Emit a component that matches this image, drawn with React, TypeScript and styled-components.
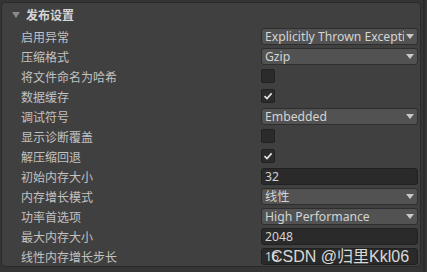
import React from "react";
import styled, { createGlobalStyle } from "styled-components";

const Global = createGlobalStyle`
  html, body {
    margin: 0;
    padding: 0;
    background: #353535;
    width: 427px;
    height: 272px;
    overflow: hidden;
  }
`;

const Page = styled.div`
  position: relative;
  width: 427px;
  height: 272px;
  display: flex;
  padding: 2px 0 0 1px;
  box-sizing: border-box;
  background: #353535;
  font-family: "Noto Sans CJK SC", "Noto Sans", sans-serif;
`;

const Panel = styled.div`
  width: 420px;
  height: 265px;
  box-sizing: border-box;
  background: #404040;
  border: 1px solid #2a2a2a;
  border-radius: 4px;
  display: flex;
  flex-direction: column;
`;

const Scroll = styled.div`
  width: 2px;
  margin-left: 2px;
  height: 272px;
  margin-top: -2px;
  background: #2b2b2b;
`;

const Header = styled.div`
  height: 23px;
  display: flex;
  align-items: center;
  gap: 6px;
  padding-left: 10px;
  color: #d6d6d6;
  font-size: 12px;
  font-weight: bold;
`;

const Tri = styled.span`
  width: 0;
  height: 0;
  border-left: 4px solid transparent;
  border-right: 4px solid transparent;
  border-top: 6px solid #8a8a8a;
`;

const Row = styled.div`
  height: 20px;
  display: flex;
  align-items: center;
  padding-left: 19px;
`;

const Label = styled.div`
  width: 240px;
  color: #c2c2c2;
  font-size: 12px;
  white-space: nowrap;
`;

const Dropdown = styled.div`
  width: 157px;
  height: 17px;
  box-sizing: border-box;
  background: #525252;
  border: 1px solid #2e2e2e;
  border-radius: 3px;
  display: flex;
  align-items: center;
  padding: 0 3px 0 3px;
  color: #d4d4d4;
  font-family: "Noto Sans", "Noto Sans CJK SC", sans-serif;
  font-size: 12.2px;
`;

const DropText = styled.span`
  flex: 1;
  overflow: hidden;
  white-space: nowrap;
`;

const Arrow = styled.span`
  width: 0;
  height: 0;
  margin-left: 2px;
  border-left: 4px solid transparent;
  border-right: 4px solid transparent;
  border-top: 5px solid #c8c8c8;
`;

const Check = styled.div`
  width: 14px;
  height: 14px;
  box-sizing: border-box;
  background: #2b2b2b;
  border: 1px solid #222;
  border-radius: 2px;
  display: flex;
  align-items: center;
  justify-content: center;
`;

const Field = styled.div`
  width: 157px;
  height: 17px;
  box-sizing: border-box;
  background: #2a2a2a;
  border: 1px solid #212121;
  border-radius: 3px;
  display: flex;
  align-items: center;
  padding-left: 3px;
  color: #d2d2d2;
  font-family: "Noto Sans", sans-serif;
  font-size: 12.2px;
`;

const Mark = styled.div`
  position: absolute;
  left: 271px;
  top: 243px;
  color: rgba(235, 235, 235, 0.92);
  font-family: "Liberation Sans", "Noto Sans CJK SC", sans-serif;
  font-size: 16px;
`;

type Item =
  | { label: string; kind: "drop"; value: string }
  | { label: string; kind: "check"; on: boolean }
  | { label: string; kind: "field"; value: string };

const items: Item[] = [
  { label: "启用异常", kind: "drop", value: "Explicitly Thrown Exceptions Only" },
  { label: "压缩格式", kind: "drop", value: "Gzip" },
  { label: "将文件命名为哈希", kind: "check", on: false },
  { label: "数据缓存", kind: "check", on: true },
  { label: "调试符号", kind: "drop", value: "Embedded" },
  { label: "显示诊断覆盖", kind: "check", on: false },
  { label: "解压缩回退", kind: "check", on: true },
  { label: "初始内存大小", kind: "field", value: "32" },
  { label: "内存增长模式", kind: "drop", value: "线性" },
  { label: "功率首选项", kind: "drop", value: "High Performance" },
  { label: "最大内存大小", kind: "field", value: "2048" },
  { label: "线性内存增长步长", kind: "field", value: "16" },
];

function Tick() {
  return (
    <svg width="10" height="10" viewBox="0 0 10 10">
      <path d="M1.5 5.2 L4 7.6 L8.6 2.4" fill="none" stroke="#e6e6e6" strokeWidth="1.6" />
    </svg>
  );
}

function Control({ item }: { item: Item }) {
  if (item.kind === "drop")
    return (
      <Dropdown>
        <DropText>{item.value}</DropText>
        <Arrow />
      </Dropdown>
    );
  if (item.kind === "check") return <Check>{item.on && <Tick />}</Check>;
  return <Field>{item.value}</Field>;
}

export default function App() {
  return (
    <Page>
      <Global />
      <Panel>
        <Header>
          <Tri />
          发布设置
        </Header>
        {items.map((it) => (
          <Row key={it.label}>
            <Label>{it.label}</Label>
            <Control item={it} />
          </Row>
        ))}
      </Panel>
      <Scroll />
      <Mark>CSDN @归里Kkl06</Mark>
    </Page>
  );
}
